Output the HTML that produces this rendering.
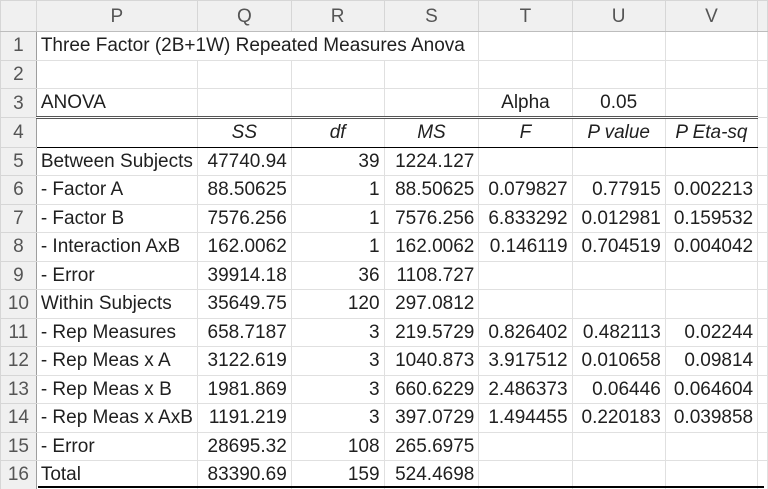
<!DOCTYPE html>
<html><head><meta charset="utf-8"><style>
html,body{margin:0;padding:0;background:#fff;width:768px;height:489px;overflow:hidden;position:relative}
table{border-collapse:collapse;table-layout:fixed;font-family:"Liberation Sans",sans-serif;font-size:19px;color:#1f1f1f}
td{border:1px solid #e0e0e0;height:27.5px;padding:0 4px;white-space:nowrap;overflow:hidden;text-align:right;line-height:27px}
tr.h td{background:#f0f0f0;color:#555;text-align:center;height:30px;font-size:19px;border-color:#d6d6d6;border-bottom:1px solid #bdbdbd}
td.rh{background:#f0f0f0;color:#555;text-align:center;border-color:#d6d6d6;border-right:1px solid #9e9e9e;padding:0}
td.l{text-align:left}
td.c{text-align:center}
td.i{text-align:center;font-style:italic}
tr.r3 td{height:25.5px}
tr.r3 td:not(.rh){border-bottom:3px double #555}
tr.r4 td:not(.rh){border-bottom:1px solid #000}
.bl{position:absolute;left:38px;width:726px;top:486px;height:2px;background:#000}
</style></head><body>
<table>
<colgroup><col style="width:38px"><col style="width:161px"><col style="width:94px"><col style="width:94px"><col style="width:95px"><col style="width:94px"><col style="width:94px"><col style="width:93px"><col style="width:10px"></colgroup>
<tr class="h"><td></td><td>P</td><td>Q</td><td>R</td><td>S</td><td>T</td><td>U</td><td>V</td><td></td></tr>
<tr><td class="rh">1</td><td class="l" colspan="4">Three Factor (2B+1W) Repeated Measures Anova</td><td></td><td></td><td></td><td></td></tr>
<tr><td class="rh">2</td><td></td><td></td><td></td><td></td><td></td><td></td><td></td><td></td></tr>
<tr class="r3"><td class="rh">3</td><td class="l">ANOVA</td><td></td><td></td><td></td><td class="c">Alpha</td><td class="c">0.05</td><td></td><td style="border-bottom:1px solid #e0e0e0"></td></tr>
<tr class="r4"><td class="rh">4</td><td></td><td class="i">SS</td><td class="i">df</td><td class="i">MS</td><td class="i">F</td><td class="i">P value</td><td class="i">P Eta-sq</td><td style="border-bottom:1px solid #e0e0e0"></td></tr>
<tr><td class="rh">5</td><td class="l">Between Subjects</td><td>47740.94</td><td>39</td><td>1224.127</td><td></td><td></td><td></td><td></td></tr>
<tr><td class="rh">6</td><td class="l">- Factor A</td><td>88.50625</td><td>1</td><td>88.50625</td><td>0.079827</td><td>0.77915</td><td>0.002213</td><td></td></tr>
<tr><td class="rh">7</td><td class="l">- Factor B</td><td>7576.256</td><td>1</td><td>7576.256</td><td>6.833292</td><td>0.012981</td><td>0.159532</td><td></td></tr>
<tr><td class="rh">8</td><td class="l">- Interaction AxB</td><td>162.0062</td><td>1</td><td>162.0062</td><td>0.146119</td><td>0.704519</td><td>0.004042</td><td></td></tr>
<tr><td class="rh">9</td><td class="l">- Error</td><td>39914.18</td><td>36</td><td>1108.727</td><td></td><td></td><td></td><td></td></tr>
<tr><td class="rh">10</td><td class="l">Within Subjects</td><td>35649.75</td><td>120</td><td>297.0812</td><td></td><td></td><td></td><td></td></tr>
<tr><td class="rh">11</td><td class="l">- Rep Measures</td><td>658.7187</td><td>3</td><td>219.5729</td><td>0.826402</td><td>0.482113</td><td>0.02244</td><td></td></tr>
<tr><td class="rh">12</td><td class="l">- Rep Meas x A</td><td>3122.619</td><td>3</td><td>1040.873</td><td>3.917512</td><td>0.010658</td><td>0.09814</td><td></td></tr>
<tr><td class="rh">13</td><td class="l">- Rep Meas x B</td><td>1981.869</td><td>3</td><td>660.6229</td><td>2.486373</td><td>0.06446</td><td>0.064604</td><td></td></tr>
<tr><td class="rh">14</td><td class="l">- Rep Meas x AxB</td><td>1191.219</td><td>3</td><td>397.0729</td><td>1.494455</td><td>0.220183</td><td>0.039858</td><td></td></tr>
<tr><td class="rh">15</td><td class="l">- Error</td><td>28695.32</td><td>108</td><td>265.6975</td><td></td><td></td><td></td><td></td></tr>
<tr><td class="rh">16</td><td class="l">Total</td><td>83390.69</td><td>159</td><td>524.4698</td><td></td><td></td><td></td><td></td></tr>
</table>
<div class="bl"></div>
</body></html>
